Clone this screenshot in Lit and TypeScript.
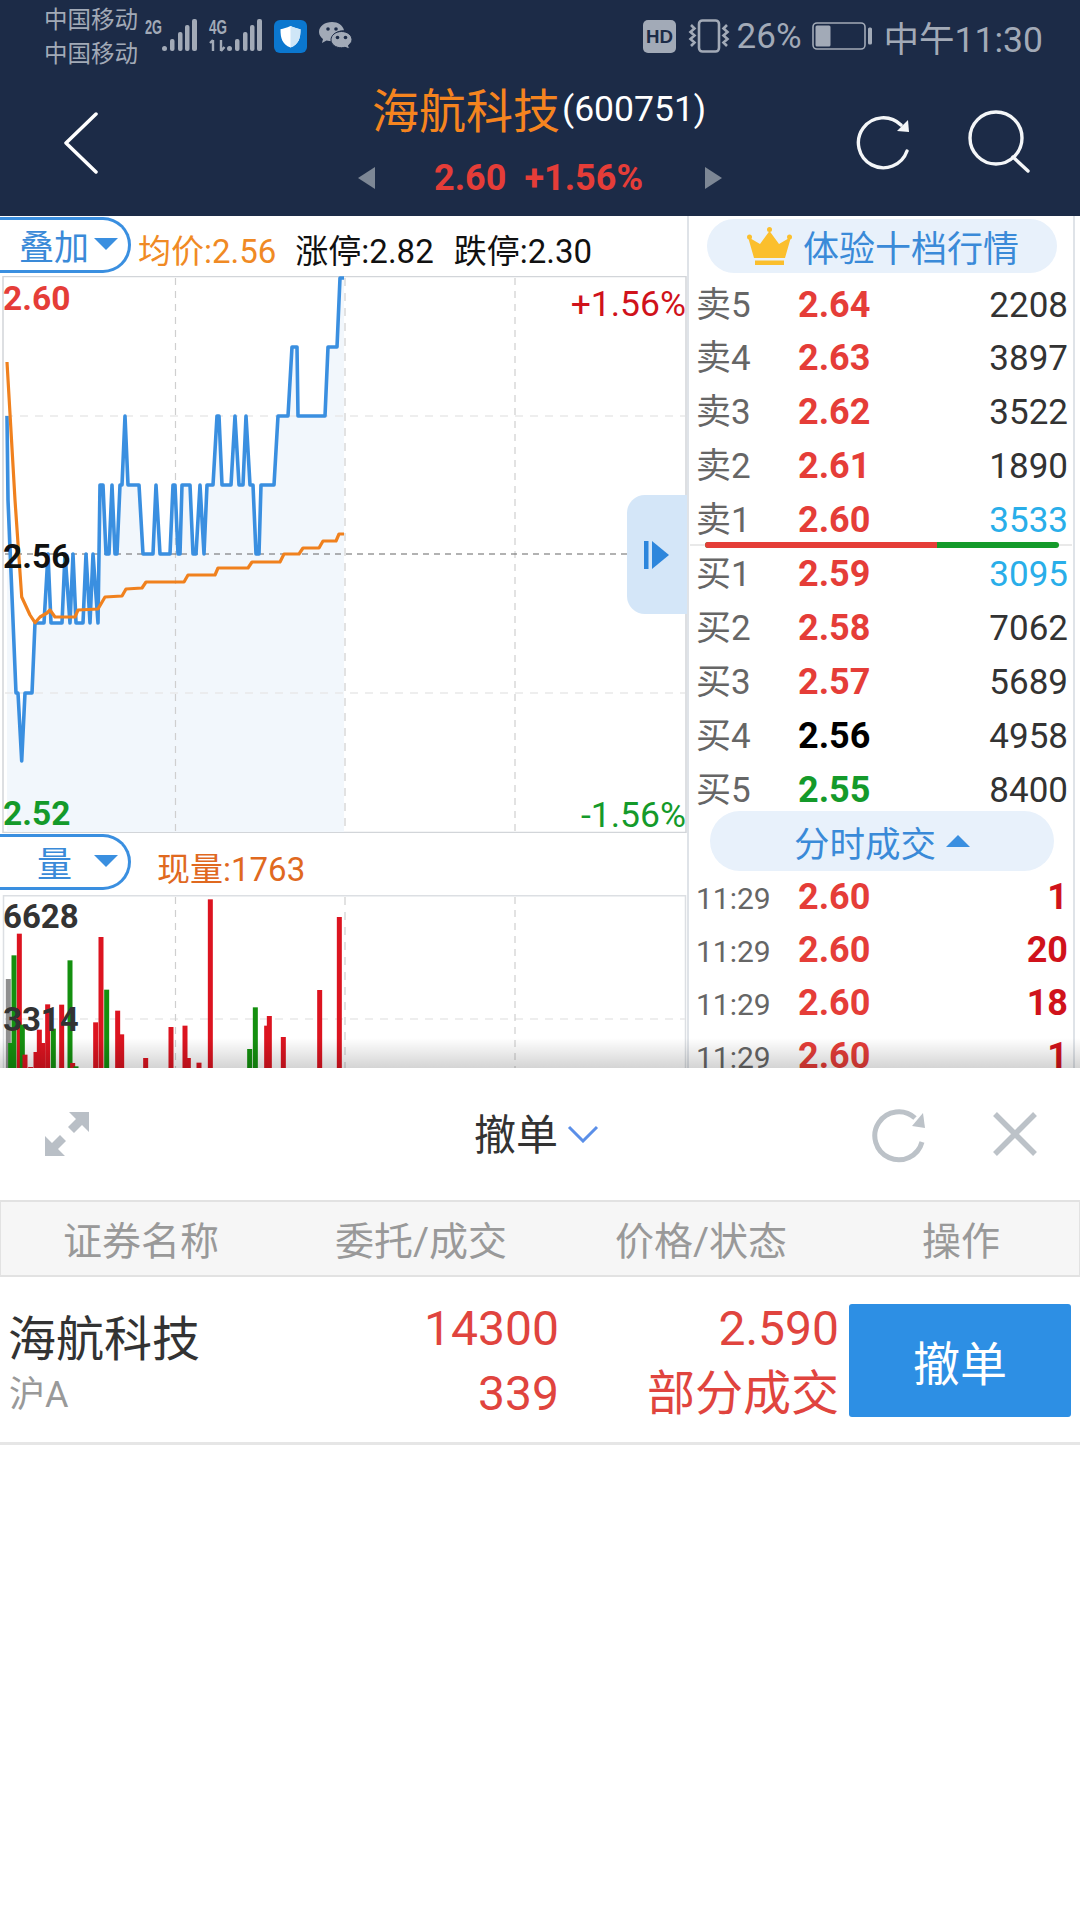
import { LitElement, html, css, svg } from "lit";
import { customElement } from "lit/decorators.js";

const BLUE: [number, number][] = [[7,416],[8,500],[16,693],[18,693],[21.7,761],[25,693],[32,693],[35,623],[44,623],[48,554],[51,623],[62,623],[65,554],[70,623],[73,554],[76,623],[83,623],[86,554],[90,623],[93,554],[98,623],[100,485],[103,485],[106,554],[109,554],[112,485],[115,554],[117,554],[120,485],[122,485],[125,416],[128,485],[139,485],[143,554],[153,554],[156,485],[160,554],[170,554],[173,485],[175,485],[178,554],[180,554],[182,485],[190,485],[193,554],[196,554],[200,485],[204,554],[207,485],[213,485],[217,416],[219,416],[222,485],[231,485],[235,416],[239,485],[243,485],[246,416],[250,485],[253,485],[256,554],[259,554],[261,485],[274,485],[278,416],[288,416],[292,347],[297,347],[298,416],[325,416],[328,347],[337,347],[340,278],[344,278]];
const ORANGE: [number, number][] = [[7,362],[15,500],[21.7,597],[30,615],[35,622.7],[40,617],[47,613],[50,610],[55,617],[75,617],[78,610],[98,609],[105,597],[122,596],[126,589],[142,588],[146,582],[184,582],[188,575],[215,575],[218,568],[248,568],[252,562],[280,562],[284,554],[299,554],[303,548],[319,548],[323,541],[336,541],[339,534],[344,534]];
const pts = (a: [number, number][]) => a.map((p) => p.join(",")).join(" ");

const BARS: [number, number, string][] = [[25,438,"g"],[32,630,"n"],[42,367,"n"],[58,302,"r"],[67,575,"n"],[75,665,"r"],[92,702,"r"],[108,657,"r"],[118,590,"r"],[128,630,"r"],[143,514,"r"],[160,587,"n"],[185,515,"r"],[210,382,"n"],[218,690,"r"],[228,700,"n"],[287,568,"r"],[303,312,"r"],[320,470,"n"],[353,533,"r"],[365,604,"r"],[372,708,"r"],[437,675,"r"],[513,582,"r"],[555,578,"r"],[565,675,"r"],[597,689,"r"],[631,199,"r"],[749,648,"n"],[766,523,"n"],[800,578,"r"],[808,549,"r"],[850,612,"r"],[959,471,"r"],[1018,252,"r"]];
const BAR_COL: Record<string, string> = { r: "#dc1420", n: "#14900f", g: "#8f8f8f" };

const ASKS = [["卖5","2.64","2208"],["卖4","2.63","3897"],["卖3","2.62","3522"],["卖2","2.61","1890"],["卖1","2.60","3533"],["买1","2.59","3095"],["买2","2.58","7062"],["买3","2.57","5689"],["买4","2.56","4958"],["买5","2.55","8400"]];
const TICKS = [["11:29","2.60","1"],["11:29","2.60","20"],["11:29","2.60","18"],["11:29","2.60","1"]];

const caret = html`<svg class="caret" width="24" height="12" viewBox="0 0 24 12"><path d="M0 0H24L12 12Z" fill="#3a8fe0"/></svg>`;

const signal = (x: number) => svg`
  <rect x=${x} y="28" width="5" height="5" rx="2.5"/>
  <rect x=${x + 8} y="21" width="4.500" height="12" rx="2"/>
  <rect x=${x + 16} y="14" width="4.500" height="19" rx="2"/>
  <rect x=${x + 23} y="7" width="4.500" height="26" rx="2"/>
  <rect x=${x + 30} y="1" width="5" height="32" rx="2"/>`;

@customElement("app-root")
export class AppRoot extends LitElement {
  static styles = css`
    :host { display: block; width: 1080px; height: 1920px; background: #fff; position: relative; overflow: hidden;
      font-family: Roboto, "Noto Sans CJK SC", sans-serif; }
    * { box-sizing: border-box; }
    .head { height: 216px; background: #1c2b47; display: flex; flex-direction: column; }
    .status { height: 72px; display: flex; align-items: flex-start; color: #a2aab7; padding-left: 44px; }
    .carrier { font-size: 23.5px; line-height: 34px; padding-top: 3px; width: 101px; flex: none; white-space: nowrap; }
    .sicon { display: block; flex: none; }
    .signals { margin-top: 14px; }
    .shield { margin: 20px 0 0 11px; }
    .wechat { margin: 22px 0 0 12px; }
    .status-right { margin-left: auto; display: flex; align-items: center; height: 72px; padding-right: 37px; }
    .pct { font-size: 35px; margin: 0 10px 0 7px; }
    .hd { margin-right: 12px; }
    .clock { font-size: 35.5px; margin-left: 12px; white-space: nowrap; }
    .nav { flex: 1; display: grid; grid-template-columns: 372px minmax(0, 1fr) 360px; position: relative; }
    .back { margin: 40px 0 0 63px; }
    .mid { display: flex; flex-direction: column; }
    .title { display: flex; align-items: center; height: 62px; margin-top: 6px; white-space: nowrap; }
    .title b { font-weight: 400; font-size: 47px; color: #f5841f; margin-bottom: 4px; }
    .title span { font-size: 35.5px; color: #fff; margin-left: 2px; }
    .quote { display: flex; align-items: center; height: 50px; margin: 13px 0 0 -14px; font-size: 36px; font-weight: 700; color: #e53d38; white-space: nowrap; }
    .quote em { font-style: normal; margin: 0 18px 0 59px; }
    .quote i { font-style: normal; }
    .tri { flex: none; }
    .quote .tri.r { margin-left: 62px; }
    .navicons { display: flex; align-items: flex-start; margin: 42px 0 0 135px; }
    .search { margin: -5px 0 0 55px; }
    .main { height: 852px; display: flex; overflow: hidden; position: relative; }
    .left { width: 687px; flex: none; display: flex; flex-direction: column; }
    .bar { display: flex; align-items: center; height: 60px; flex: none; }
    .pill { width: 131px; height: 56px; margin-top: -2px; border: 3.5px solid #3a8fe0; border-left: none; border-radius: 0 28px 28px 0; display: flex; align-items: center;
      color: #3a8ad8; font-size: 35px; flex: none; }
    .pill .t { flex: 1; line-height: 1; white-space: nowrap; margin-top: 7px; }
    .pill .ml { padding-left: 19px; }
    .pill .s { padding-left: 37px; }
    .caret { flex: none; margin-right: 10px; margin-top: -2px; }
    .stat { font-size: 33px; white-space: nowrap; margin-top: 6px; }
    .avg { color: #f08a24; margin-left: 7px; }
    .up { color: #111; margin-left: 19px; }
    .dn { color: #111; margin-left: 20px; }
    .now { color: #e0691f; margin-left: 26px; margin-top: 7px; }
    .chart { position: relative; height: 557px; flex: none; }
    .chart svg { display: block; }
    .vol { position: relative; flex: 1; margin-top: 2px; overflow: hidden; }
    .lab { position: absolute; font-size: 33px; line-height: 38px; white-space: nowrap; }
    .pct-lab { font-size: 35.5px; }
    .bold { font-weight: 700; }
    .big { font-size: 33.5px; }
    .handle { position: absolute; right: 0; top: 219px; width: 60px; height: 119px; background: #d4e6f8; border-radius: 18px 0 0 18px; display: flex; align-items: center; justify-content: center; }
    .right { flex: 1; width: 388px; margin-right: 5px; border-left: 2px solid #dfe3e8; border-right: 2px solid #dfe3e8; display: flex; flex-direction: column; align-items: stretch; position: relative; }
    .top-pill { height: 54px; margin: 3px 16px 9.5px 18px; flex: none; background: #e8f1fb; border-radius: 27px; display: flex; align-items: center; color: #3a8ad8; font-size: 36px; padding-left: 40px; gap: 11px; white-space: nowrap; }
    .rows { display: flex; flex-direction: column; gap: 9.9px; flex: none; }
    .row { height: 44px; line-height: 44px; display: grid; grid-template-columns: 102px 1fr auto; align-items: baseline; padding: 0 5px 0 7px; }
    .row .a { font-size: 35px; color: #666; white-space: nowrap; }
    .row .p { font-size: 36px; font-weight: 700; color: #e53d38; }
    .row .p.b { color: #000; }
    .row .p.g { color: #149a2a; }
    .row .v { font-size: 35px; color: #333; }
    .row .v.c { color: #29aee9; }
    .sep { position: absolute; left: 1px; right: 1px; top: 328px; height: 2px; background: #e9e9e9; }
    .depth { position: absolute; left: 16px; width: 354px; top: 326px; height: 6px; border-radius: 3px; display: flex; overflow: hidden; background: #149a2a; }
    .depth div { width: 232px; background: #e53d38; }
    .sub-pill { height: 60px; flex: none; margin: -0.5px 19px 5px 21px; background: #e8f1fb; border-radius: 30px; color: #3a8ad8; font-size: 35.5px; display: flex; align-items: center; justify-content: center; gap: 10px; white-space: nowrap; }
    .tick { gap: 10px; }
    .tick .a { font-size: 30px; }
    .tick .row { height: 43px; line-height: 43px; }
    .tick .v { font-weight: 700; color: #d0121b; font-size: 36px; }
    .shade { position: absolute; left: 0; right: 0; bottom: 0; height: 30px; background: linear-gradient(to bottom, rgba(0,0,0,0), rgba(0,0,0,0.17)); pointer-events: none; }
    .tool { height: 132px; display: flex; align-items: center; position: relative; padding: 0 42px 0 45px; }
    .tool .c { position: absolute; left: 474px; display: flex; align-items: center; gap: 9px; font-size: 42px; color: #333; white-space: nowrap; }
    .tool .c span { margin-top: -5px; }
    .tool .rt { margin-left: auto; display: flex; align-items: center; gap: 64px; }
    .thead { height: 77px; background: #f6f6f6; border: 2px solid #e2e2e2; border-width: 2px 1px; display: grid; grid-template-columns: 280px 280px 280px 240px; align-items: center; font-size: 39px; color: #999; text-align: center; white-space: nowrap; }
    .thead span { margin-top: -2px; }
    .trow { height: 168px; border-bottom: 3px solid #e6e6e6; padding-top: 2px; display: grid; grid-template-columns: 280px 280px 280px 1fr; align-items: center; }
    .name { padding-left: 8px; display: flex; flex-direction: column; }
    .name b { font-weight: 400; font-size: 48px; line-height: 60px; color: #333; margin-top: 6px; }
    .name span { font-size: 36px; line-height: 46px; color: #999; margin: 2px 0 0 1px; }
    .num { display: flex; flex-direction: column; align-items: flex-end; font-size: 48px; line-height: 65px; color: #e0443e; padding-right: 1px; white-space: nowrap; }
    .btn { margin-left: 9px; width: 222px; height: 113px; background: #2d8fe4; color: #fff; font-size: 47px; border-radius: 3px; display: flex; align-items: center; justify-content: center; }
  `;

  private priceChart() {
    const top = 276;
    const fill = [...BLUE, [344, 832], [7, 832]] as [number, number][];
    const toLocal = (a: [number, number][]) => a.map(([px, py]) => [px, py - top] as [number, number]);
    return html`<svg width="687" height="557" viewBox="0 0 687 557">
      <rect x="3" y="0.5" width="683" height="556" fill="#fff" stroke="#d2d5d9" stroke-width="1.5"/>
      <polygon points=${pts(toLocal(fill))} fill="#f2f7fc"/>
      <g stroke="#e9e9e9" stroke-width="1.5" stroke-dasharray="8 7">
        <line x1="5" x2="685" y1="140" y2="140"/><line x1="5" x2="685" y1="417" y2="417"/>
      </g>
      <g stroke="#cfcfcf" stroke-width="1.2" stroke-dasharray="7 6">
        <line x1="175.5" x2="175.5" y1="2" y2="556"/><line x1="515" x2="515" y1="2" y2="556"/>
      </g>
      <line x1="345" x2="345" y1="2" y2="556" stroke="#e2e2e2" stroke-width="2" stroke-dasharray="8 7"/>
      <line x1="5" x2="685" y1="278" y2="278" stroke="#666" stroke-width="1.2" stroke-dasharray="6 5"/>
      <polyline points=${pts(toLocal(BLUE))} fill="none" stroke="#3a8fe0" stroke-width="3.600" stroke-linejoin="round"/>
      <polyline points=${pts(toLocal(ORANGE))} fill="none" stroke="#f0811e" stroke-width="3.200" stroke-linejoin="round"/>
    </svg>`;
  }

  private volChart() {
    return html`<svg width="687" height="176" viewBox="0 0 687 176">
      <path d="M3.500 176V.75H685.500V176" fill="none" stroke="#dcdfe3" stroke-width="1.5"/>
      <line x1="5" x2="685" y1="124" y2="124" stroke="#e9e9e9" stroke-width="1.5" stroke-dasharray="8 7"/>
      <line x1="175.5" x2="175.5" y1="2" y2="176" stroke="#cfcfcf" stroke-width="1.2" stroke-dasharray="7 6"/>
      <line x1="345" x2="345" y1="2" y2="176" stroke="#e2e2e2" stroke-width="2" stroke-dasharray="8 7"/>
      <line x1="515" x2="515" y1="2" y2="176" stroke="#cfcfcf" stroke-width="1.2" stroke-dasharray="7 6"/>
      ${BARS.map(([zx, zy, c]) => {
        const t = 830 + zy / 3 - 892;
        return svg`<rect x=${zx / 3 - 2.5} y=${t} width="5" height=${176 - t} fill=${BAR_COL[c]}/>`;
      })}
    </svg>`;
  }

  render() {
    return html`
      <div class="head">
        <div class="status">
          <div class="carrier">中国移动<br />中国移动</div>
          <svg class="sicon signals" width="118" height="40" viewBox="0 -4 118 40" fill="#a2aab7">
            <text x="0" y="16" font-size="19.500" font-weight="700" font-family="Liberation Sans" textLength="17" lengthAdjust="spacingAndGlyphs">2G</text>
            ${signal(17)}
            <text x="64" y="16" font-size="19.500" font-weight="700" font-family="Liberation Sans" textLength="18" lengthAdjust="spacingAndGlyphs">4G</text>
            <path d="M68 33V22M65 25l3-3M76 22V33M76 33l3.500-4" fill="none" stroke="#a2aab7" stroke-width="2.400"/>
            ${signal(82)}
          </svg>
          <svg class="sicon shield" width="33" height="33" viewBox="0 0 33 33">
            <rect width="33" height="33" rx="6" fill="#0b77cf"/>
            <path d="M16.500 6c4 2 7 2.600 10 3.200 0 9-1.500 14.800-10 18.300-8.500-3.500-10-9.300-10-18.300 3-.6 6-1.200 10-3.200Z" fill="#fff"/>
            <path d="M16.500 6c4 2 7 2.600 10 3.200 0 9-1.500 14.800-10 18.300Z" fill="#cfe6f7"/>
          </svg>
          <svg class="sicon wechat" width="33" height="27" viewBox="0 0 33 27" fill="#a2aab7">
            <path d="M13 0C6 0 0 4 0 10c0 3 2 5.500 4 7l-1 4 4.500-2.500c2 .5 3.500.7 5.500.7C12 13 18 7.700 25 8.300 24 3.500 19 0 13 0Z"/>
            <path d="M22.500 9.500c-6 0-10.500 3.800-10.500 8.300s4.500 8 10.500 8c1 0 2.500-.3 3.500-.5l4.500 1.700-1-3.700c2-1.500 3.500-3.500 3.500-5.500 0-4.500-4.500-8.300-10.500-8.300Z" stroke="#1c2b47" stroke-width="1"/>
            <circle cx="9" cy="7" r="1.800" fill="#1c2b47"/><circle cx="17" cy="7" r="1.800" fill="#1c2b47"/>
            <circle cx="18.500" cy="15.500" r="1.800" fill="#1c2b47"/><circle cx="26.500" cy="15.500" r="1.800" fill="#1c2b47"/>
          </svg>
          <div class="status-right">
            <svg class="sicon hd" width="33" height="33" viewBox="0 0 33 33">
              <rect width="33" height="33" rx="5" fill="#a2aab7"/>
              <text x="16.500" y="23" text-anchor="middle" font-size="19" font-weight="700" font-family="Liberation Sans" fill="#1c2b47" textLength="27" lengthAdjust="spacingAndGlyphs">HD</text>
            </svg>
            <svg class="sicon" width="42" height="34" viewBox="0 0 42 34" fill="none" stroke="#a2aab7">
              <rect x="11" y="1.500" width="20" height="31" rx="3.500" stroke-width="2.600"/>
              <path d="M3 6l3.500 3.500L2.500 13l4 3.500-4 3.500 4 3.500L3 27M39 6l-3.500 3.500 4 3.500-4 3.500 4 3.500-4 3.500L39 27" stroke-width="2.600"/>
            </svg>
            <span class="pct">26%</span>
            <svg class="sicon" width="60" height="28" viewBox="0 0 60 28">
              <rect x="1" y="1" width="52" height="26" rx="4" fill="none" stroke="#a2aab7" stroke-width="1.600"/>
              <rect x="3.500" y="3.500" width="15" height="21" rx="1.500" fill="#a2aab7"/>
              <rect x="56" y="5.500" width="4" height="17" rx="1.500" fill="#a2aab7"/>
            </svg>
            <span class="clock">中午11:30</span>
          </div>
        </div>
        <div class="nav">
          <svg class="back sicon" width="36" height="62" viewBox="0 0 36 62"><path d="M33 2L3 31l30 29" fill="none" stroke="#fff" stroke-width="3.500" stroke-linecap="round" stroke-linejoin="round"/></svg>
          <div class="mid">
            <div class="title"><b>海航科技</b><span>(600751)</span></div>
            <div class="quote">
              <svg class="tri" width="17" height="22" viewBox="0 0 17 22"><path d="M17 0V22L0 11Z" fill="#7d8795"/></svg>
              <em>2.60</em><i>+1.56%</i>
              <svg class="tri r" width="17" height="22" viewBox="0 0 17 22"><path d="M0 0V22L17 11Z" fill="#7d8795"/></svg>
            </div>
          </div>
          <div class="navicons">
            <svg class="sicon" width="56" height="56" viewBox="855 115 56 56">
              <path d="M901 126A25 25 0 1 0 907 152" fill="none" stroke="#f4f6f8" stroke-width="3.400" stroke-linecap="round"/>
              <path d="M897 132L909 133 908 121Z" fill="#f4f6f8"/>
            </svg>
            <svg class="sicon search" width="66" height="66" viewBox="966 110 66 66">
              <circle cx="996" cy="139" r="26" fill="none" stroke="#f4f6f8" stroke-width="3.400"/>
              <path d="M1013 158L1028 172" stroke="#f4f6f8" stroke-width="3.400" stroke-linecap="round"/>
            </svg>
          </div>
        </div>
      </div>

      <div class="main">
        <div class="left">
          <div class="bar">
            <div class="pill"><span class="t ml">叠加</span>${caret}</div>
            <span class="stat avg">均价:2.56</span>
            <span class="stat up">涨停:2.82</span>
            <span class="stat dn">跌停:2.30</span>
          </div>
          <div class="chart">
            ${this.priceChart()}
            <span class="lab bold big" style="left:3px;top:4px;color:#e53d38">2.60</span>
            <span class="lab bold big" style="left:3px;top:262px;color:#111">2.56</span>
            <span class="lab bold big" style="left:3px;top:519px;color:#149a2a">2.52</span>
            <span class="lab pct-lab" style="right:1px;top:9px;color:#d0121b">+1.56%</span>
            <span class="lab pct-lab" style="right:1px;top:520px;color:#149a2a">-1.56%</span>
            <div class="handle">
              <svg width="26" height="30" viewBox="0 0 26 30"><rect x="0" y="1" width="4.500" height="28" fill="#2d86dc"/><path d="M8 1L25 15 8 29Z" fill="#2d86dc"/></svg>
            </div>
          </div>
          <div class="bar">
            <div class="pill"><span class="t s">量</span>${caret}</div>
            <span class="stat now">现量:1763</span>
          </div>
          <div class="vol">
            ${this.volChart()}
            <span class="lab bold" style="left:3px;top:3px;color:#333">6628</span>
            <span class="lab bold" style="left:3px;top:106px;color:#333">3314</span>
          </div>
        </div>
        <div class="right">
          <div class="top-pill">
            <svg width="45" height="38" viewBox="0 0 45 38" fill="#fbbf2d">
              <circle cx="2.500" cy="10" r="2.500"/><circle cx="22.500" cy="2.500" r="2.500"/><circle cx="42.500" cy="10" r="2.500"/>
              <path d="M7 31L1 10l12 7L22.500 4 32 17l12-7-6 21Z"/><rect x="8" y="33.500" width="29" height="4.500"/>
            </svg>
            <span>体验十档行情</span>
          </div>
          <div class="rows">
            ${ASKS.map(([a, p, v], i) => html`<div class="row">
              <span class="a">${a}</span>
              <span class="p ${p === "2.56" ? "b" : p === "2.55" ? "g" : ""}">${p}</span>
              <span class="v ${i === 4 || i === 5 ? "c" : ""}">${v}</span>
            </div>`)}
          </div>
          <div class="sep"></div>
          <div class="depth"><div></div></div>
          <div class="sub-pill">
            <span>分时成交</span>
            <svg width="24" height="12" viewBox="0 0 24 12"><path d="M12 0L24 12H0Z" fill="#3a8fe0"/></svg>
          </div>
          <div class="rows tick">
            ${TICKS.map(([a, p, v]) => html`<div class="row">
              <span class="a">${a}</span><span class="p">${p}</span><span class="v">${v}</span>
            </div>`)}
          </div>
        </div>
        <div class="shade"></div>
      </div>

      <div class="tool">
        <svg class="sicon" width="44" height="44" viewBox="0 0 44 44" fill="#b9bfc6">
          <path d="M24 0H44V20L37 13 29 21 23 15 31 7Z"/><path d="M0 44V24L7 31 15 23 21 29 13 37 20 44Z"/>
        </svg>
        <div class="c"><span>撤单</span>
          <svg width="32" height="18" viewBox="0 0 32 18"><path d="M2 2L16 16 30 2" fill="none" stroke="#5b8fe8" stroke-width="3"/></svg>
        </div>
        <div class="rt">
          <svg class="sicon" width="58" height="58" viewBox="870 1105 58 58">
            <path d="M915 1118A24 24 0 1 0 922 1142" fill="none" stroke="#bcc2c8" stroke-width="5"/>
            <path d="M912 1126L925 1128 923 1113Z" fill="#bcc2c8"/>
          </svg>
          <svg class="sicon" width="46" height="46" viewBox="0 0 46 46"><path d="M3 3L43 43M43 3L3 43" stroke="#bcc2c8" stroke-width="5.500"/></svg>
        </div>
      </div>
      <div class="thead"><span>证券名称</span><span>委托/成交</span><span>价格/状态</span><span>操作</span></div>
      <div class="trow">
        <div class="name"><b>海航科技</b><span>沪A</span></div>
        <div class="num"><span>14300</span><span>339</span></div>
        <div class="num"><span>2.590</span><span>部分成交</span></div>
        <div class="btn">撤单</div>
      </div>
    `;
  }
}
